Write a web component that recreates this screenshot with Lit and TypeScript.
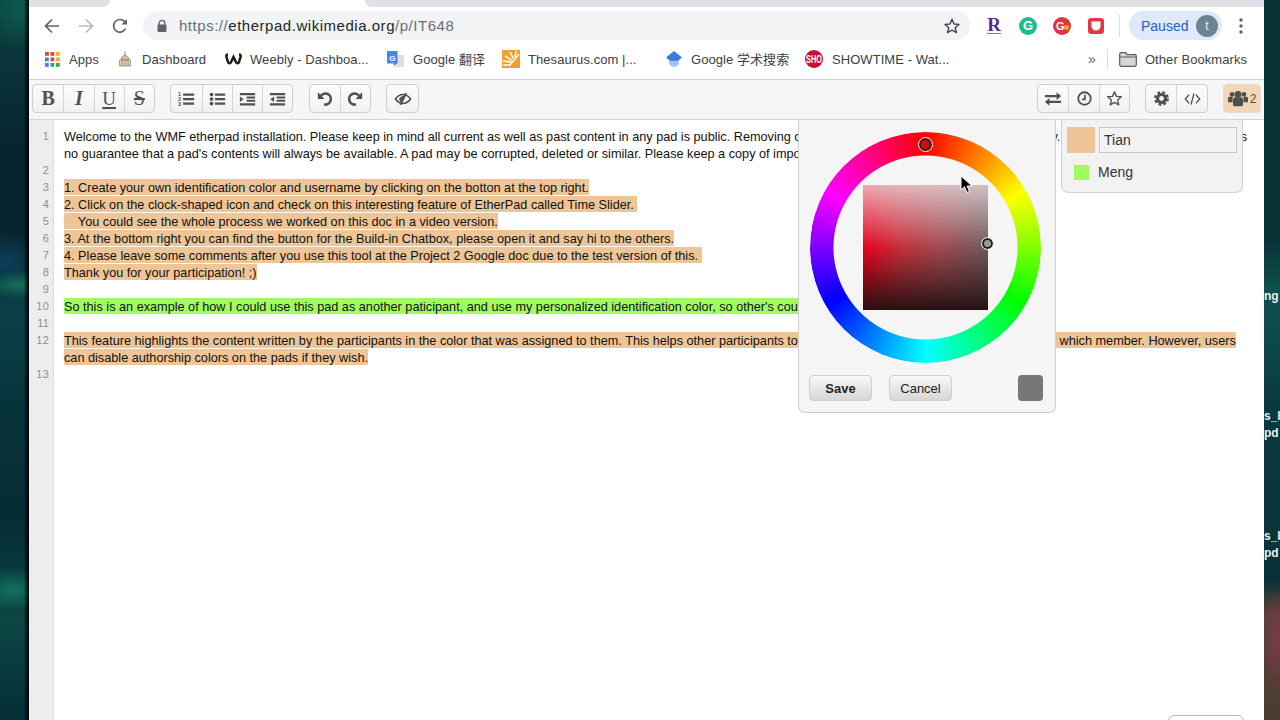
import { LitElement, html, css, svg, nothing } from 'lit';
import { customElement } from 'lit/decorators.js';

type Seg = { text: string; who?: 'tian' | 'meng' };

const O = (text: string): Seg => ({ text, who: 'tian' });

// one entry per visual row, wrapping is fixed so it lands where the pad wraps
const ROWS: Seg[] = [
  { text: "Welcome to the WMF etherpad installation. Please keep in mind all current as well as past content in any pad is public. Removing content does not remove it from a pad's history. Furthermore, please see there is" },
  { text: "no guarantee that a pad's contents will always be available. A pad may be corrupted, deleted or similar. Please keep a copy of important notes elsewhere." },
  { text: ' ' },
  O('1. Create your own identification color and username by clicking on the botton at the top right.'),
  O('2. Click on the clock-shaped icon and check on this interesting feature of EtherPad called Time Slider. '),
  O('    You could see the whole process we worked on this doc in a video version.'),
  O('3. At the bottom right you can find the button for the Build-in Chatbox, please open it and say hi to the others.'),
  O('4. Please leave some comments after you use this tool at the Project 2 Google doc due to the test version of this. '),
  O('Thank you for your participation! ;)'),
  { text: ' ' },
  { text: "So this is an example of how I could use this pad as another paticipant, and use my personalized identification color, so other's could see.", who: 'meng' },
  { text: ' ' },
  O('This feature highlights the content written by the participants in the color that was assigned to them. This helps other participants to rapidly identify which portions were written by which member. However, users'),
  O('can disable authorship colors on the pads if they wish.'),
  { text: ' ' },
];

const NUMBERS = [1, 2, 3, 4, 5, 6, 7, 8, 9, 10, 11, 12, 13];
const TALL = [1, 12];

const icon = {
  back: html`<svg width="18" height="18" viewBox="0 0 18 18"><path d="M16 9H3M9 2.5 2.5 9 9 15.5" fill="none" stroke="#5f6368" stroke-width="1.7"/></svg>`,
  forward: html`<svg width="18" height="18" viewBox="0 0 18 18"><path d="M2 9h13M9 2.5 15.5 9 9 15.5" fill="none" stroke="#b4b7bb" stroke-width="1.7"/></svg>`,
  reload: html`<svg width="18" height="18" viewBox="0 0 18 18"><path d="M14.6 11.5A6.3 6.3 0 1 1 13.6 4.6L15.5 6.5" fill="none" stroke="#5f6368" stroke-width="1.7"/><path d="M16 2v5.5h-5.500z" fill="#5f6368"/></svg>`,
  lock: html`<svg width="12" height="14" viewBox="0 0 12 14"><path d="M3.200 6V4.200a2.800 2.800 0 0 1 5.600 0V6" fill="none" stroke="#5f6368" stroke-width="1.400"/><rect x="1.500" y="5.500" width="9" height="7.500" rx="1" fill="#5f6368"/></svg>`,
  star: html`<svg width="18" height="18" viewBox="0 0 18 18"><path d="M9 2.300l2 4.700 5 .4-3.800 3.300 1.200 5L9 13.100l-4.400 2.600 1.200-5L2 7.400l5-.4z" fill="none" stroke="#4a4d50" stroke-width="1.500" stroke-linejoin="round"/></svg>`,
  pocket: html`<svg width="16" height="16" viewBox="0 0 16 16"><rect width="16" height="16" rx="3" fill="#df3a45"/><path d="M3.500 3.500h9V8a4.500 4.500 0 0 1-9 0z" fill="#fff"/></svg>`,
  dots: html`<svg width="4" height="16" viewBox="0 0 4 16"><circle cx="2" cy="2" r="1.700" fill="#5f6368"/><circle cx="2" cy="8" r="1.700" fill="#5f6368"/><circle cx="2" cy="14" r="1.700" fill="#5f6368"/></svg>`,
  apps: html`<svg width="15" height="15" viewBox="0 0 15 15">
    ${['#e2453c', '#e2453c', '#f2b21c', '#3f7fe8', '#e2453c', '#f2b21c', '#3f7fe8', '#34a853', '#34a853'].map((c, i) =>
      svg`<rect x=${(i % 3) * 5.5} y=${Math.floor(i / 3) * 5.5} width="3.800" height="3.800" fill=${c}></rect>`)}
  </svg>`,
  dashboard: html`<svg width="14" height="18" viewBox="0 0 14 18"><path d="M7 1v4M3 9.500C3 7 5 6 7 5c2 1 4 2 4 4.500z" fill="#cbbfb0" stroke="#8c8378" stroke-width=".8"/><path d="M1.500 10h11v6h-11z" fill="#e3d6b8" stroke="#9a8f80" stroke-width=".8"/><path d="M4 10v6M7 10v6M10 10v6" stroke="#8f6f55" stroke-width=".8"/></svg>`,
  weebly: html`<svg width="17" height="14" viewBox="0 0 17 14"><path d="M3 2.500c-1.500 0-2 1-1.500 2.700l1.500 5c.5 1.500 2.500 1.500 3 0L8.500 5 11 10.200c.5 1.500 2.500 1.500 3 0l1.500-5c.5-1.700 0-2.700-1.500-2.700" fill="none" stroke="#1d1d1d" stroke-width="2.500"/></svg>`,
  translate: html`<svg width="17" height="17" viewBox="0 0 17 17"><rect x="6" y="4" width="11" height="12" fill="#dcdfe2"/><path d="M0 0h10.500v12.500H0z" fill="#4a86e8"/><path d="M7 14l3.500-1.500H7z" fill="#2a5cb0"/><text x="2.200" y="9.500" font-size="8" font-weight="700" fill="#fff" font-family="Liberation Sans">G</text></svg>`,
  thesaurus: html`<svg width="18" height="18" viewBox="0 0 18 18"><rect width="18" height="18" fill="#f0a030"/><path d="M1 15h7L17 4M1 11l8 1M3 6l7 4.500M8 2l3.500 6.500M14 1l-1 6" fill="none" stroke="#fff" stroke-width="1.500"/></svg>`,
  scholar: html`<svg width="18" height="18" viewBox="0 0 18 18"><circle cx="9" cy="12" r="5" fill="#a3c3f5"/><path d="M9 1l8 6.500-4 3.200H5L1 7.500z" fill="#3d78dc"/></svg>`,
  showtime: html`<svg width="18" height="18" viewBox="0 0 18 18"><circle cx="9" cy="9" r="9" fill="#c8102e"/><text x="9" y="13" font-size="10" font-weight="700" text-anchor="middle" textLength="16" lengthAdjust="spacingAndGlyphs" fill="#fff" font-family="Liberation Sans">SHO</text></svg>`,
  folder: html`<svg width="18" height="15" viewBox="0 0 18 15"><path d="M.700 2.200c0-.8.6-1.500 1.400-1.500h4.400l1.500 2h8c.8 0 1.300.6 1.300 1.300v8.800c0 .8-.6 1.500-1.400 1.500H2.100c-.8 0-1.400-.7-1.400-1.500z" fill="#d8d8d8" stroke="#5a5a5a" stroke-width="1.200"/><path d="M1 5h16" stroke="#5a5a5a" stroke-width="1"/></svg>`,
  listOl: html`<svg width="17" height="18" viewBox="0 0 20 20"><text x="0" y="6.500" class="tiny">1</text><text x="0" y="12.500" class="tiny">2</text><text x="0" y="18.500" class="tiny">3</text><path d="M6 3.500h13v2.600H6zM6 8.800h13v2.600H6zM6 14.100h13v2.600H6z"/></svg>`,
  listUl: html`<svg width="17" height="18" viewBox="0 0 20 20"><circle cx="3" cy="4.700" r="2.200"/><circle cx="3" cy="10" r="2.200"/><circle cx="3" cy="15.300" r="2.200"/><path d="M7 3.500h12v2.600H7zM7 8.800h12v2.600H7zM7 14.100h12v2.600H7z"/></svg>`,
  indent: html`<svg width="17" height="18" viewBox="0 0 20 20"><path d="M1 3h18v2.500H1zM9 7.200h10v2.300H9zM9 11h10v2.300H9zM1 15h18v2.500H1zM1 7l4.500 3.200L1 13.500z"/></svg>`,
  outdent: html`<svg width="17" height="18" viewBox="0 0 20 20"><path d="M1 3h18v2.500H1zM9 7.200h10v2.300H9zM9 11h10v2.300H9zM1 15h18v2.500H1zM6 7l-4.500 3.200L6 13.500z"/></svg>`,
  undo: html`<svg width="17" height="17" viewBox="0 0 18 18"><path d="M4.500 7.500A5.800 5.800 0 1 1 8.500 15.200" fill="none" stroke="#505050" stroke-width="2.800"/><path d="M2 2.500v7h7z"/></svg>`,
  redo: html`<svg width="17" height="17" viewBox="0 0 18 18"><path d="M13.500 7.500A5.800 5.800 0 1 0 9.500 15.200" fill="none" stroke="#505050" stroke-width="2.800"/><path d="M16 2.500v7H9z"/></svg>`,
  eyeSlash: html`<svg width="18" height="16" viewBox="0 0 20 18"><path d="M1.500 9C4 5.500 7 4 10 4s6 1.500 8.500 5C16 12.500 13 14 10 14S4 12.500 1.500 9z" fill="none" stroke="#505050" stroke-width="1.800"/><path d="M5.500 9c1-2 3-3.500 6-4L8 12.500C6.800 11.800 6 10.500 5.500 9z"/><path d="M13.500 2.500 7 15.500" stroke="#505050" stroke-width="2.200"/></svg>`,
  exchange: html`<svg width="18" height="18" viewBox="0 0 20 20"><path d="M1 5.500h13V2.500l5 4.300-5 4.200V8H1zM19 12v2.500H6v3l-5-4.300L6 9v3z"/></svg>`,
  clock: html`<svg width="15" height="15" viewBox="0 0 18 18"><circle cx="9" cy="9" r="7.500" fill="none" stroke="#505050" stroke-width="2.200"/><path d="M9.500 4.500V10H6" fill="none" stroke="#505050" stroke-width="2"/></svg>`,
  starOutline: html`<svg width="17" height="17" viewBox="0 0 20 20"><path d="M10 2.200l2.300 5.300 5.700.5-4.300 3.800 1.300 5.600L10 14.500l-5 2.900 1.300-5.600L2 8l5.700-.5z" fill="none" stroke="#505050" stroke-width="1.600" stroke-linejoin="round"/></svg>`,
  gear: html`<svg width="15" height="15" viewBox="0 0 18 18"><circle cx="9" cy="9" r="4.800" fill="none" stroke="#505050" stroke-width="3.800"/><circle cx="9" cy="9" r="7.500" fill="none" stroke="#505050" stroke-width="2.800" stroke-dasharray="3.300 2.590"/></svg>`,
  code: html`<svg width="17" height="16" viewBox="0 0 20 18"><path d="M6 4 1.500 9 6 14M14 4l4.500 5L14 14M11.700 2.500 8.300 15.500" fill="none" stroke="#505050" stroke-width="1.500"/></svg>`,
  users: html`<svg width="20" height="17" viewBox="0 0 22 18"><circle cx="4.500" cy="4.500" r="2.700"/><circle cx="17.500" cy="4.500" r="2.700"/><circle cx="11" cy="4.500" r="3.800"/><path d="M0 8.500c0-1 1-1.500 2-1.500h3v6H0zM22 8.500c0-1-1-1.500-2-1.500h-3v6h5z"/><path d="M5.500 10c0-1.500 1-2.500 2.500-2.500h6c1.500 0 2.500 1 2.500 2.500v6c0 1-.7 1.500-1.500 1.500H7c-.8 0-1.500-.5-1.500-1.500z"/></svg>`,
  cursor: html`<svg width="13" height="19" viewBox="0 0 13 19"><path d="M1 1v14l3.500-3.200L7 17.500l2.500-1-2.400-5.500H12z" fill="#000" stroke="#fff" stroke-width="1"/></svg>`,
};

const BOOKMARKS = [
  { icon: icon.apps, label: 'Apps', width: 73, gap: 9 },
  { icon: icon.dashboard, label: 'Dashboard', width: 107, gap: 10 },
  { icon: icon.weebly, label: 'Weebly - Dashboa...', width: 162, gap: 8 },
  { icon: icon.translate, label: 'Google 翻译', width: 115, gap: 9 },
  { icon: icon.thesaurus, label: 'Thesaurus.com |...', width: 163, gap: 8 },
  { icon: icon.scholar, label: 'Google 学术搜索', width: 140, gap: 8 },
  { icon: icon.showtime, label: 'SHOWTIME - Wat...', width: 150, gap: 9 },
];

const LABELS = [
  { text: 'ng', top: 289 },
  { text: 's_la', top: 409 },
  { text: 'pd', top: 426 },
  { text: 's_la', top: 529 },
  { text: 'pd', top: 546 },
];

@customElement('app-root')
export class AppRoot extends LitElement {
  static styles = css`
    :host {
      display: flex;
      width: 1280px;
      height: 720px;
      overflow: hidden;
      background: #062c34;
      font-family: 'Liberation Sans', Arial, sans-serif;
    }
    .desk-left {
      width: 29px;
      flex: none;
      background:
        linear-gradient(to right, transparent 82%, #000 100%),
        radial-gradient(ellipse 40px 14px at 20px 285px, #16715c, transparent),
        radial-gradient(ellipse 30px 30px at 6px 262px, #0d3f5a, transparent),
        radial-gradient(ellipse 46px 22px at 14px 590px, #137060, transparent),
        radial-gradient(ellipse 40px 40px at 20px 10px, #0e5a50, transparent),
        linear-gradient(#0b3f40 0, #06252e 150px, #06252e 240px, #0a4048 310px, #07323a 420px, #062c34 520px, #0a4644 620px, #062e36 720px);
    }
    .desk-right {
      position: relative;
      width: 16px;
      flex: none;
      overflow: hidden;
      background:
        radial-gradient(ellipse 14px 50px at 12px 640px, #7a3a4a, transparent),
        linear-gradient(#0a3338 0, #0a3338 240px, #0f4f4c 290px, #0d4a4a 340px, #0a3a3e 400px, #093238 580px, #5a4038 612px, #4a3c34 720px);
    }
    .desk-label {
      position: absolute;
      left: 0;
      color: #e8eeee;
      font-size: 12px;
      font-weight: 700;
      line-height: 15px;
      white-space: nowrap;
    }
    .window {
      width: 1235px;
      flex: none;
      display: flex;
      flex-direction: column;
      background: #fff;
    }

    .tabs { height: 7px; flex: none; display: flex; }
    .tab-l { width: 81px; background: #dee1e6; border-bottom-right-radius: 7px; }
    .tab-m { width: 255px; background: #fff; }
    .tab-r { flex: 1; background: #dee1e6; border-bottom-left-radius: 7px; }

    .chrome-bar {
      height: 37px;
      flex: none;
      display: flex;
      align-items: center;
      padding-left: 6px;
      box-sizing: border-box;
    }
    .slot { width: 34px; height: 29px; flex: none; display: flex; align-items: center; justify-content: center; }
    .address {
      width: 827px;
      height: 29px;
      margin-left: 6px;
      flex: none;
      display: flex;
      align-items: center;
      box-sizing: border-box;
      padding: 0 9px 0 13px;
      border-radius: 15px;
      background: #f1f3f4;
      font-size: 15px;
      letter-spacing: 0.53px;
      color: #6a6e72;
    }
    .address .url { margin-left: 11px; flex: 1; }
    .address b { font-weight: 400; color: #24272a; }
    .ext-first { margin-left: 7px; }
    .ext-r { color: #5b2a96; font: 700 19px 'Liberation Serif', serif; border-bottom: 1px solid #8a6ab5; line-height: 16px; }
    .ext-g {
      width: 18px; height: 18px; border-radius: 50%;
      display: flex; align-items: center; justify-content: center;
      font-size: 13px; font-weight: 700; color: #fff; background: #1bbd8a;
    }
    .ext-g.red { position: relative; background: #e0333f; font-size: 11px; justify-content: flex-start; padding-left: 3px; box-sizing: border-box; }
    .ext-g.red::after { content: ''; position: absolute; right: 2px; top: 8px; width: 5px; height: 5px; border-radius: 50%; background: #f5a623; }
    .divider { width: 1px; height: 22px; flex: none; background: #dadce0; }
    .divider.ext { margin-left: 6px; }
    .paused {
      width: 93px; height: 29px; margin-left: 9px; flex: none;
      display: flex; align-items: center; justify-content: space-between;
      box-sizing: border-box; padding: 0 4px 0 12px;
      border-radius: 15px; background: #dfe9f9; color: #2763b8; font-size: 14px;
    }
    .avatar {
      width: 22px; height: 22px; border-radius: 50%;
      display: flex; align-items: center; justify-content: center;
      background: #6c8393; color: #e8eef2; font-size: 12px;
    }
    .dots { width: 38px; }

    .bookmarks {
      height: 36px;
      flex: none;
      display: flex;
      align-items: center;
      box-sizing: border-box;
      padding: 0 17px 5px 16px;
      border-bottom: 1px solid #d3d3d3;
      font-family: 'Liberation Sans', 'Noto Sans CJK SC', sans-serif;
      font-size: 13px;
      line-height: 15px;
      letter-spacing: 0.06px;
      color: #3c4043;
    }
    .bm { display: flex; align-items: center; gap: 8px; white-space: nowrap; flex: none; }
    .bm svg { flex: none; }
    .more { margin-left: auto; font-size: 14px; color: #5f6368; }
    .bookmarks .divider { height: 20px; margin: 0 11px 0 11px; }

    .pad-bar {
      height: 40px;
      flex: none;
      display: flex;
      align-items: center;
      gap: 15.300px;
      box-sizing: border-box;
      padding: 0 3px 2px;
      background: #f6f6f6;
      border-bottom: 1px solid #d4d4d4;
    }
    .group {
      display: flex;
      height: 29px;
      box-sizing: border-box;
      border: 1px solid #cfcfcf;
      border-radius: 4px;
      background: linear-gradient(#fcfcfc, #f1f1f1);
    }
    .group.push { margin-left: auto; }
    .btn {
      width: 30.250px;
      height: 100%;
      box-sizing: border-box;
      display: flex;
      align-items: center;
      justify-content: center;
      color: #505050;
      fill: #505050;
      font: 700 20px 'Liberation Serif', serif;
    }
    .btn + .btn { border-left: 1px solid #d4d4d4; }
    .btn .tiny { font: 700 6.500px 'Liberation Sans', sans-serif; }
    .btn.italic { font-style: italic; }
    .btn.under { text-decoration: underline; text-decoration-thickness: 2px; text-underline-offset: 2px; font-weight: 400; font-size: 19px; }
    .btn.strike { text-decoration: line-through; text-decoration-thickness: 1.500px; font-weight: 400; }
    .users-btn {
      width: 38px;
      gap: 2px;
      align-items: center;
      justify-content: center;
      background: #f3d7b4;
      border-color: #e6dccf;
      fill: #505050;
      color: #505050;
      font-size: 12px;
    }

    .editor { position: relative; flex: 1; min-height: 0; display: flex; overflow: hidden; }
    .gutter {
      width: 25px;
      flex: none;
      box-sizing: border-box;
      padding: 8px 4px 0 0;
      background: #ededed;
      border-right: 1px solid #dcdcdc;
      text-align: right;
      font-size: 11px;
      letter-spacing: 0.2px;
      line-height: 17px;
      color: #8f8f8f;
    }
    .num { height: 17px; }
    .num.tall { height: 34px; }
    .text {
      flex: 1;
      min-width: 0;
      padding: 9px 0 0 10px;
      font-size: 12.700px;
      line-height: 17px;
      color: #111;
    }
    .row { height: 17px; white-space: pre; }
    .tian, .meng { padding: 2px 0 0; }
    .tian { background: #eec596; }
    .meng { background: #a0fb62; }

    .picker {
      position: absolute;
      left: 769px;
      top: 0;
      width: 258px;
      height: 293px;
      box-sizing: border-box;
      padding: 12px 12px 0 10px;
      background: #f5f5f5;
      border: 1px solid #cfcfcf;
      border-top: none;
      border-radius: 0 0 7px 7px;
    }
    .wheel {
      position: relative;
      width: 231px;
      height: 231px;
      margin-left: 1px;
      display: grid;
      place-items: center;
    }
    .ring {
      position: absolute;
      inset: 0;
      border-radius: 50%;
      background: conic-gradient(#f00, #ff0 60deg, #0f0 120deg, #0ff 180deg, #00f 240deg, #f0f 300deg, #f00);
      -webkit-mask: radial-gradient(circle, transparent 91.500px, #000 92.500px);
      mask: radial-gradient(circle, transparent 91.500px, #000 92.500px);
    }
    .square {
      width: 125px;
      height: 125px;
      background:
        linear-gradient(rgba(238, 226, 229, 0.75) 0, rgba(238, 226, 229, 0) 50%, rgba(36, 16, 18, 0) 50%, rgba(36, 16, 18, 0.98) 100%),
        linear-gradient(to right, #ea001c 0, #c4303c 30%, #a34850 60%, #6e5a5c 100%);
    }
    .marker {
      position: absolute;
      border-radius: 50%;
      border: 2px solid #222;
      outline: 1.500px solid #f0f0f0;
      box-sizing: content-box;
    }
    .marker.hue { left: 109px; top: 6px; width: 9px; height: 9px; background: #c80f12; }
    .marker.sv { left: 172px; top: 106px; width: 7px; height: 7px; background: #999; }
    .actions { display: flex; align-items: center; margin-top: 12px; gap: 17px; }
    .action {
      width: 63px;
      height: 26px;
      box-sizing: border-box;
      display: flex;
      align-items: center;
      justify-content: center;
      border: 1px solid #cfcfcf;
      border-radius: 4px;
      background: linear-gradient(#f8f8f8, #d6d6d6);
      font-size: 13px;
      color: #222;
    }
    .action.save { font-weight: 700; }
    .current { width: 25px; height: 26px; margin-left: auto; border-radius: 4px; background: #767676; }

    .users {
      position: absolute;
      left: 1032px;
      top: 0;
      width: 182px;
      height: 73px;
      box-sizing: border-box;
      padding: 7px 5px 0;
      background: #f2f2f2;
      border: 1px solid #d2d2d2;
      border-top: none;
      border-radius: 0 0 7px 7px;
      font-size: 14px;
      color: #333;
    }
    .me { display: flex; gap: 4px; }
    .me-swatch { width: 28px; height: 26px; flex: none; background: #eec596; }
    .me-name {
      width: 138px;
      height: 26px;
      box-sizing: border-box;
      padding-left: 4px;
      line-height: 25px;
      background: #f3f3f3;
      border: 1px solid #c8c8c8;
    }
    .other { display: flex; align-items: center; gap: 9px; margin: 11px 0 0 7px; }
    .other-swatch { width: 15px; height: 15px; background: #a0fb62; }

    .cursor { position: absolute; left: 931px; top: 55px; line-height: 0; }
    .chat {
      position: absolute;
      left: 1139px;
      bottom: -30px;
      width: 76px;
      height: 35px;
      box-sizing: border-box;
      background: #fff;
      border: 1px solid #b5b5b5;
      border-radius: 6px;
    }
  `;

  render() {
    return html`
      <div class="desk-left"></div>
      <div class="window">
        <div class="tabs"><div class="tab-l"></div><div class="tab-m"></div><div class="tab-r"></div></div>
        ${this._chromeBar()}
        ${this._bookmarks()}
        ${this._padBar()}
        <div class="editor">
          <div class="gutter">
            ${NUMBERS.map(n => html`<div class="num ${TALL.includes(n) ? 'tall' : ''}">${n}</div>`)}
          </div>
          <div class="text">
            ${ROWS.map(r => html`<div class="row"><span class=${r.who ?? nothing}>${r.text}</span></div>`)}
          </div>
          ${this._picker()}
          <div class="users">
            <div class="me"><div class="me-swatch"></div><div class="me-name">Tian</div></div>
            <div class="other"><div class="other-swatch"></div><span>Meng</span></div>
          </div>
          <div class="cursor">${icon.cursor}</div>
          <div class="chat"></div>
        </div>
      </div>
      <div class="desk-right">
        ${LABELS.map(l => html`<div class="desk-label" style="top:${l.top}px">${l.text}</div>`)}
      </div>
    `;
  }

  private _chromeBar() {
    return html`
      <div class="chrome-bar">
        <div class="slot">${icon.back}</div>
        <div class="slot">${icon.forward}</div>
        <div class="slot">${icon.reload}</div>
        <div class="address">
          ${icon.lock}
          <span class="url">https://<b>etherpad.wikimedia.org</b>/p/IT648</span>
          ${icon.star}
        </div>
        <div class="slot ext-first"><span class="ext-r">R</span></div>
        <div class="slot"><span class="ext-g">G</span></div>
        <div class="slot"><span class="ext-g red">G</span></div>
        <div class="slot">${icon.pocket}</div>
        <div class="divider ext"></div>
        <div class="paused">Paused<span class="avatar">t</span></div>
        <div class="slot dots">${icon.dots}</div>
      </div>
    `;
  }

  private _bookmarks() {
    return html`
      <div class="bookmarks">
        ${BOOKMARKS.map(b => html`
          <div class="bm" style="width:${b.width}px;gap:${b.gap}px">${b.icon}<span>${b.label}</span></div>
        `)}
        <span class="more">»</span>
        <div class="divider"></div>
        <div class="bm">${icon.folder}<span>Other Bookmarks</span></div>
      </div>
    `;
  }

  private _padBar() {
    return html`
      <div class="pad-bar">
        <div class="group">
          <div class="btn">B</div>
          <div class="btn italic">I</div>
          <div class="btn under">U</div>
          <div class="btn strike">S</div>
        </div>
        <div class="group">
          <div class="btn">${icon.listOl}</div>
          <div class="btn">${icon.listUl}</div>
          <div class="btn">${icon.indent}</div>
          <div class="btn">${icon.outdent}</div>
        </div>
        <div class="group">
          <div class="btn">${icon.undo}</div>
          <div class="btn">${icon.redo}</div>
        </div>
        <div class="group">
          <div class="btn">${icon.eyeSlash}</div>
        </div>
        <div class="group push">
          <div class="btn">${icon.exchange}</div>
          <div class="btn">${icon.clock}</div>
          <div class="btn">${icon.starOutline}</div>
        </div>
        <div class="group">
          <div class="btn">${icon.gear}</div>
          <div class="btn">${icon.code}</div>
        </div>
        <div class="group users-btn">${icon.users}<span>2</span></div>
      </div>
    `;
  }

  private _picker() {
    return html`
      <div class="picker">
        <div class="wheel">
          <div class="ring"></div>
          <div class="square"></div>
          <div class="marker hue"></div>
          <div class="marker sv"></div>
        </div>
        <div class="actions">
          <div class="action save">Save</div>
          <div class="action">Cancel</div>
          <div class="current"></div>
        </div>
      </div>
    `;
  }
}
